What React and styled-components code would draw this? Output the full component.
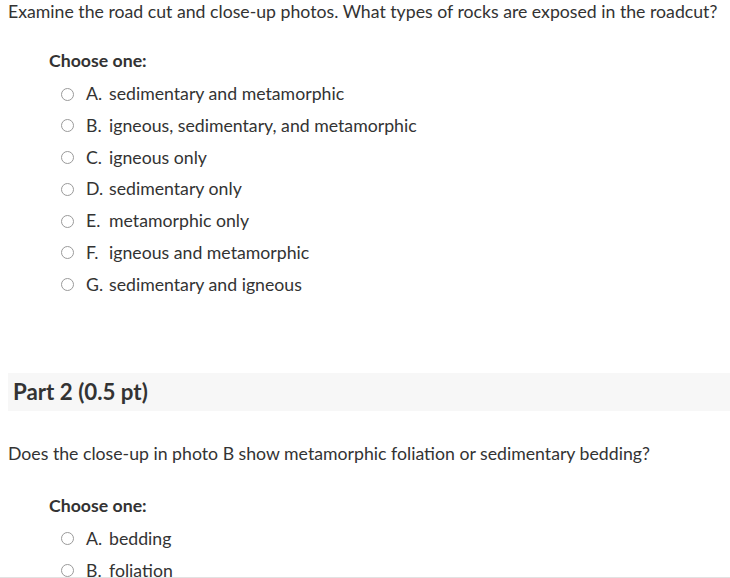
import React from 'react';
import styled, { createGlobalStyle } from 'styled-components';

const GlobalStyle = createGlobalStyle`
    body {
        margin: 0;
        background: #fff;
        font-family: Lato, "Open Sans", sans-serif;
        color: #333;
    }
`;

const Page = styled.div`
    width: 730px;
    height: 578px;
    overflow: hidden;
    border-bottom: 1px solid #e2e2e2;
    box-sizing: border-box;
    padding-top: 1px;
`;

const Question = styled.p`
    margin: ${props => props.margin || '0'};
    padding-left: 8px;
    font-size: 17.7px;
    line-height: 22px;
    color: #333;
`;

const ChoiceBlock = styled.div`
    padding-left: 49px;
    margin: ${props => props.margin || '0'};
`;

const ChooseLabel = styled.div`
    font-size: 17.7px;
    font-weight: 700;
    line-height: 22px;
    color: #333;
    margin-bottom: 11px;
`;

const OptionList = styled.ul`
    list-style: none;
    margin: 0;
    padding: 0 0 0 12px;
    display: flex;
    flex-direction: column;
    gap: 9.8px;
`;

const Option = styled.li`
    display: flex;
    align-items: center;
    font-size: 17.7px;
    line-height: 22px;
    color: #333;
`;

const Radio = styled.span`
    width: 13px;
    height: 13px;
    border: 1px solid #9a9a9a;
    border-radius: 50%;
    box-sizing: border-box;
    margin-right: 12px;
    flex-shrink: 0;
    background: #fff;
`;

const Letter = styled.span`
    width: 23px;
    flex-shrink: 0;
`;

const PartHeader = styled.div`
    margin: ${props => props.margin || '0'} 0 0 8px;
    height: 38px;
    display: flex;
    align-items: center;
    padding-left: 5px;
    background: #f7f7f7;
    font-size: 22.3px;
    font-weight: 700;
    color: #333;
`;

const firstOptions = [
    ['A.', 'sedimentary and metamorphic'],
    ['B.', 'igneous, sedimentary, and metamorphic'],
    ['C.', 'igneous only'],
    ['D.', 'sedimentary only'],
    ['E.', 'metamorphic only'],
    ['F.', 'igneous and metamorphic'],
    ['G.', 'sedimentary and igneous'],
];

const secondOptions = [
    ['A.', 'bedding'],
    ['B.', 'foliation'],
];

const Choices = ({ options, margin }) => (
    <ChoiceBlock margin={margin}>
        <ChooseLabel>Choose one:</ChooseLabel>
        <OptionList>
            {options.map(([letter, text]) => (
                <Option key={letter}>
                    <Radio />
                    <Letter>{letter}</Letter>
                    {text}
                </Option>
            ))}
        </OptionList>
    </ChoiceBlock>
);

export default function App() {
    return (
        <>
            <GlobalStyle />
            <Page>
                <Question>
                    Examine the road cut and close-up photos. What types of rocks are exposed in the roadcut?
                </Question>
                <Choices options={firstOptions} margin={'27px 0 0 0'} />
                <PartHeader margin={'77px'}>Part 2 (0.5 pt)</PartHeader>
                <Question margin={'32px 0 0 0'}>
                    Does the close-up in photo B show metamorphic foliation or sedimentary bedding?
                </Question>
                <Choices options={secondOptions} margin={'30px 0 0 0'} />
            </Page>
        </>
    );
}
